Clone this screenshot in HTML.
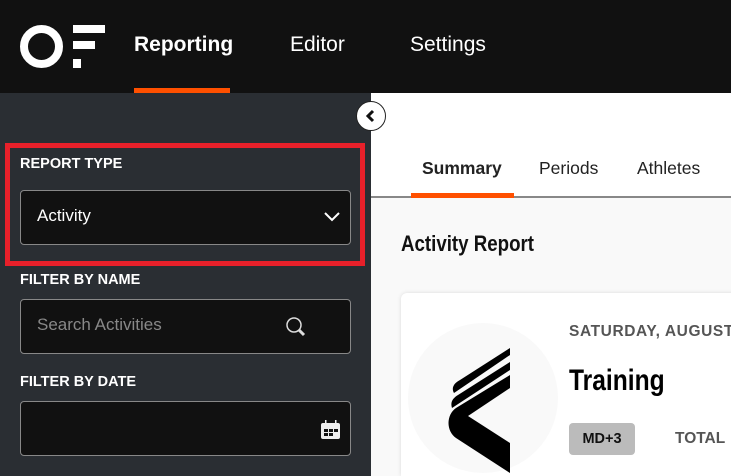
<!DOCTYPE html>
<html style="width:731px;height:476px;overflow:hidden"><head><style>
*{box-sizing:border-box;margin:0;padding:0}
body{width:731px;height:476px;overflow:hidden;font-family:"Liberation Sans",sans-serif;background:#f9f9f9;position:relative}
.hdr{position:absolute;left:0;top:0;width:731px;height:93px;background:#111}
.nav{position:absolute;top:33px;color:#fff;font-size:21px}
.side{position:absolute;left:0;top:93px;width:371px;height:383px;background:#2a2e33}
.lbl{position:absolute;left:20px;color:#fff;font-weight:bold;font-size:14.5px}
.inp{position:absolute;left:20px;width:331px;height:55px;background:#111;border:1px solid #888;border-radius:4px;color:#fff;font-size:17px;padding:15px 16px}
.top{position:absolute;left:371px;top:93px;width:360px;height:105px;background:#fff;border-bottom:2px solid #888}
.tab{position:absolute;top:158px;font-size:17.5px;color:#222}
</style></head><body>
<div class="hdr">
<div style="position:absolute;left:20px;top:25px;width:43px;height:43px;border:8px solid #fff;border-radius:50%"></div>
<div style="position:absolute;left:73px;top:25px;width:32px;height:8px;background:#fff"></div>
<div style="position:absolute;left:73px;top:41px;width:22px;height:8px;background:#fff"></div>
<div style="position:absolute;left:73px;top:59px;width:8px;height:9px;background:#fff"></div>
<div class="nav" style="left:134px;font-weight:bold">Reporting</div>
<div class="nav" style="left:290px">Editor</div>
<div class="nav" style="left:410px">Settings</div>
<div style="position:absolute;left:134px;top:88px;width:96px;height:5px;background:#ff5000"></div>
</div>
<div class="side">
<div style="position:absolute;left:5px;top:50px;width:360px;height:123px;border:5px solid #e8202a"></div>
<div class="lbl" style="top:63px">REPORT TYPE</div>
<div class="inp" style="top:97px">Activity
<svg style="position:absolute;right:10px;top:21px" width="16" height="10"><path d="M1 1L8 8L15 1" stroke="#fff" stroke-width="2" fill="none"/></svg></div>
<div class="lbl" style="top:179px">FILTER BY NAME</div>
<div class="inp" style="top:206px;color:#888">Search Activities
<svg style="position:absolute;left:264px;top:16px" width="22" height="22"><circle cx="9" cy="9" r="7" stroke="#ddd" stroke-width="1.5" fill="none"/><path d="M14 14L19 19" stroke="#ddd" stroke-width="3"/></svg></div>
<div class="lbl" style="top:281px">FILTER BY DATE</div>
<div class="inp" style="top:308px">
<svg style="position:absolute;left:299px;top:18px" width="22" height="20"><rect x="1" y="3" width="19" height="16" rx="2" fill="#eee"/><g fill="#111"><rect x="4" y="9" width="4" height="3"/><rect x="9" y="9" width="4" height="3"/><rect x="14" y="9" width="4" height="3"/><rect x="4" y="13" width="4" height="3"/><rect x="9" y="13" width="4" height="3"/></g><rect x="5" y="0" width="1.5" height="4" fill="#eee"/><rect x="15" y="0" width="1.5" height="4" fill="#eee"/></svg></div>
</div>
<div class="top"></div>
<div style="position:absolute;left:356px;top:101px;width:30px;height:30px;border-radius:50%;background:#fff;border:1px solid #222"><svg width="28" height="28"><path d="M16 9L11 14L16 19" stroke="#111" stroke-width="3" fill="none"/></svg></div>
<div class="tab" style="left:422px;font-weight:bold">Summary</div>
<div class="tab" style="left:539px">Periods</div>
<div class="tab" style="left:637px">Athletes</div>
<div style="position:absolute;left:411px;top:193px;width:103px;height:5px;background:#ff5000"></div>
<div style="position:absolute;left:401px;top:231px;font-size:22px;font-weight:bold;color:#111;transform:scaleX(.85);transform-origin:left">Activity Report</div>
<div style="position:absolute;left:401px;top:293px;width:340px;height:183px;background:#fff;border-radius:6px 6px 0 0;box-shadow:0 0 4px rgba(0,0,0,.12);overflow:hidden">
<div style="position:absolute;left:7px;top:30px;width:150px;height:150px;border-radius:50%;background:#f9f9f9"></div>
<svg style="position:absolute;left:45px;top:50px" width="70" height="135"><g fill="#000"><path d="M64 5L64 12L8 50C5 45 8 40 14 37Z"/><path d="M64 19L64 27L6 65C4 59 7 55 12 52Z"/><path d="M64 32L64 45L22 73L64 100L64 130L10 95C0 88 0 72 10 65Z"/></g></svg>
<div style="position:absolute;left:168px;top:30px;font-size:15.5px;font-weight:bold;color:#555;letter-spacing:.6px;white-space:nowrap">SATURDAY, AUGUST</div>
<div style="position:absolute;left:168px;top:71px;font-size:30px;font-weight:bold;color:#000;transform:scaleX(.82);transform-origin:left">Training</div>
<div style="position:absolute;left:168px;top:130px;width:66px;height:32px;background:#bbb;border-radius:4px;font-size:14.5px;font-weight:bold;text-align:center;line-height:32px;color:#111">MD+3</div>
<div style="position:absolute;left:274px;top:137px;font-size:15.5px;font-weight:bold;color:#555">TOTAL</div>
</div>
</body></html>
